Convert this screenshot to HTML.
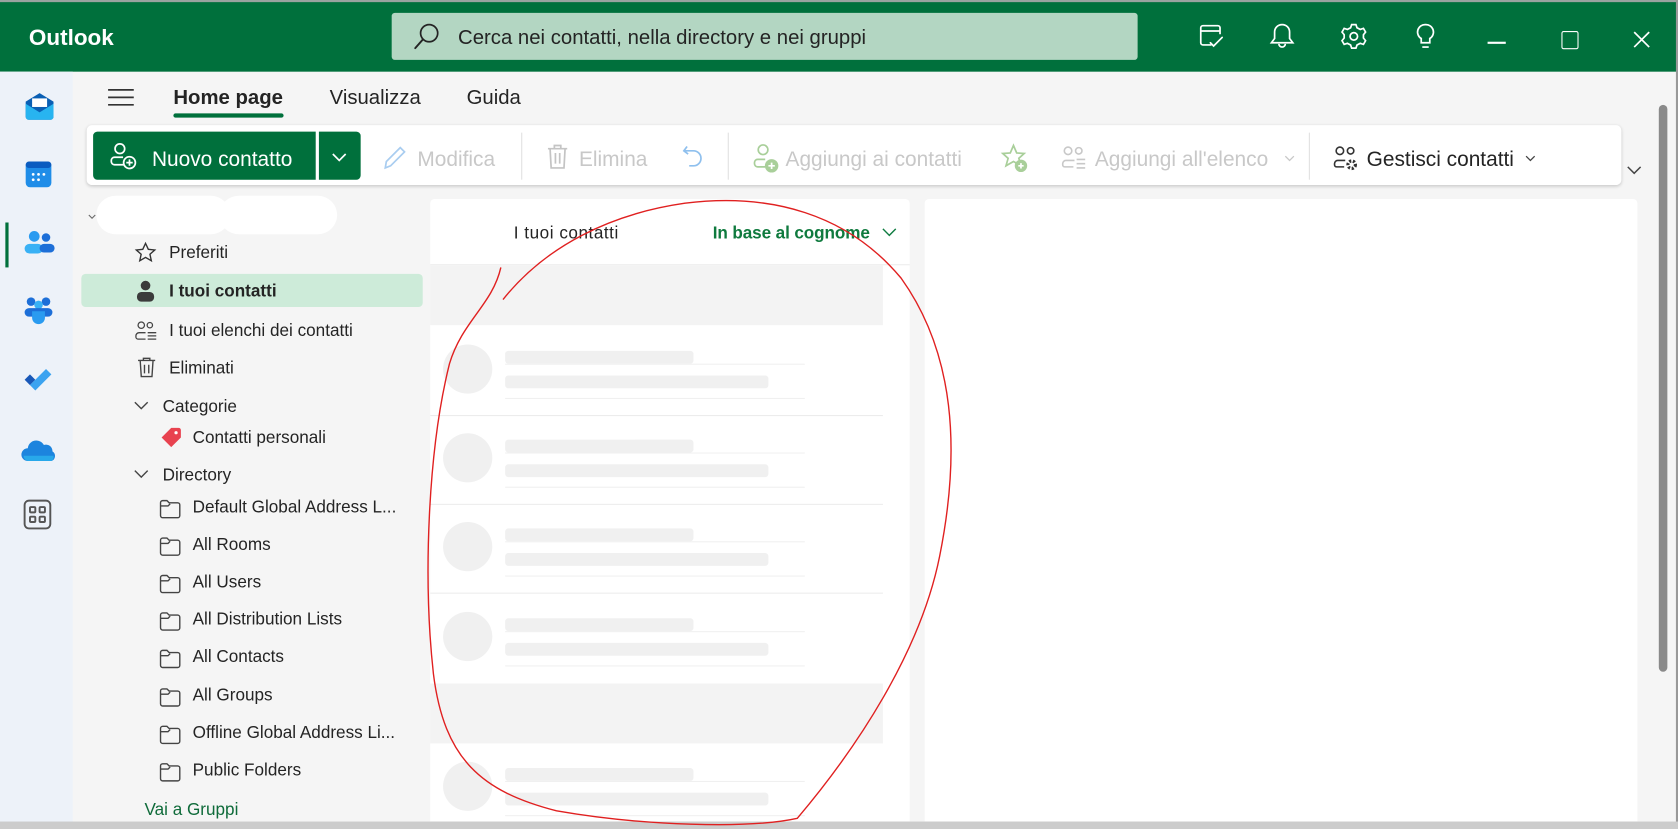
<!DOCTYPE html>
<html><head><meta charset="utf-8"><style>
html,body{margin:0;padding:0;width:1678px;height:829px;overflow:hidden;background:#fff;font-family:"Liberation Sans",sans-serif}
#w{position:absolute;left:0;top:0;width:1568px;height:775px;transform:scale(1.0702,1.0697);transform-origin:0 0;background:#f5f5f5;overflow:hidden}
.a{position:absolute}
.t{position:absolute;white-space:nowrap;font-size:16px;color:#242424;margin-top:2px}
svg{position:absolute;overflow:visible}
.sk{position:absolute;background:#f0f0f0;border-radius:3px}
</style></head><body><div id="w">
<div class="a" style="left:0;top:0;width:1568px;height:67px;background:#00703c"></div>
<div class="a" style="left:0;top:0;width:1568px;height:2px;background:#9aa3a0"></div>
<div class="t" style="left:27px;top:22px;color:#fff;font-size:21px;font-weight:bold">Outlook</div>
<div class="a" style="left:366px;top:12px;width:697px;height:44px;background:#b3d6c2;border-radius:3px"></div>
<svg style="left:385px;top:20px" width="28" height="28" viewBox="0 0 28 28"><circle cx="16" cy="11" r="8" fill="none" stroke="#242424" stroke-width="1.6"/><path d="M10 17 L3 25" stroke="#242424" stroke-width="1.8" stroke-linecap="round"/></svg>
<div class="t" style="left:428px;top:23px;font-size:19px;color:#242424">Cerca nei contatti, nella directory e nei gruppi</div>
<svg style="left:1119px;top:20px" width="28" height="28" viewBox="0 0 28 28" fill="none" stroke="#fff" stroke-width="1.6"><path d="M13 22H5a2 2 0 0 1-2-2V6a2 2 0 0 1 2-2h14a2 2 0 0 1 2 2v6M3 9h18"/><path d="M12 20l3 3 8-8" stroke-linecap="round"/></svg>
<svg style="left:1185px;top:20px" width="26" height="28" viewBox="0 0 26 28" fill="none" stroke="#fff" stroke-width="1.6"><path d="M13 3c-4 0-7 3-7 7v6l-3 4h20l-3-4v-6c0-4-3-7-7-7z"/><path d="M10 21a3 3 0 0 0 6 0"/></svg>
<svg style="left:1251px;top:20px" width="28" height="28" viewBox="0 0 28 28" fill="none" stroke="#fff" stroke-width="1.6"><path d="M12 3h4l1 3 3 1.5 3-1 2 3.5-2 2.5v3l2 2.5-2 3.5-3-1-3 1.5-1 3h-4l-1-3-3-1.5-3 1-2-3.5 2-2.5v-3l-2-2.5 2-3.5 3 1L11 6z"/><circle cx="14" cy="14" r="3.5"/></svg>
<svg style="left:1320px;top:20px" width="24" height="28" viewBox="0 0 24 28" fill="none" stroke="#fff" stroke-width="1.6"><path d="M12 3a7 7 0 0 0-4 13v4h8v-4a7 7 0 0 0-4-13z"/><path d="M9 24h6"/></svg>
<div class="a" style="left:1390px;top:39px;width:17px;height:1.5px;background:#fff"></div>
<div class="a" style="left:1459px;top:29px;width:14px;height:15px;border:1.5px solid #fff;border-radius:2px"></div>
<svg style="left:1526px;top:29px" width="16" height="16" viewBox="0 0 16 16" stroke="#fff" stroke-width="1.6"><path d="M1 1L15 15M15 1L1 15"/></svg>
<div class="a" style="left:0;top:67px;width:68px;height:708px;background:#edf2f9"></div>
<div class="a" style="left:5px;top:208px;width:3px;height:42px;background:#00703c"></div>
<svg style="left:22px;top:85px" width="30" height="28" viewBox="0 0 30 28"><path d="M2 10L15 2l13 8v14a3 3 0 0 1-3 3H5a3 3 0 0 1-3-3z" fill="#0a5fb4"/><path d="M2 12l13 8 13-8v12a3 3 0 0 1-3 3H5a3 3 0 0 1-3-3z" fill="#28b4f0"/><rect x="8" y="7" width="14" height="8" fill="#fff"/></svg>
<svg style="left:23px;top:150px" width="26" height="26" viewBox="0 0 26 26"><rect x="1" y="1" width="24" height="24" rx="4" fill="#1f8de8"/><rect x="1" y="1" width="24" height="6" rx="3" fill="#0b5cc0"/><g fill="#fff"><circle cx="8" cy="13" r="1.3"/><circle cx="13" cy="13" r="1.3"/><circle cx="18" cy="13" r="1.3"/><circle cx="8" cy="18" r="1.3"/><circle cx="13" cy="18" r="1.3"/></g></svg>
<svg style="left:22px;top:214px" width="30" height="26" viewBox="0 0 30 26"><circle cx="10" cy="7" r="5" fill="#2a9bf0"/><circle cx="21" cy="8" r="4" fill="#1d6fd8"/><rect x="1" y="14" width="17" height="9" rx="4.5" fill="#39b1f5"/><rect x="15" y="14" width="14" height="8" rx="4" fill="#1d6fd8"/></svg>
<svg style="left:22px;top:276px" width="28" height="30" viewBox="0 0 28 30"><circle cx="7" cy="6" r="4" fill="#1d6fd8"/><circle cx="21" cy="6" r="4" fill="#1d6fd8"/><circle cx="14" cy="9" r="4" fill="#39b1f5"/><rect x="1" y="12" width="26" height="8" rx="4" fill="#1d6fd8"/><path d="M8 15h12v6a6 6 0 0 1-12 0z" fill="#2a9bf0"/></svg>
<svg style="left:22px;top:342px" width="28" height="26" viewBox="0 0 28 26"><path d="M1 13l5-5 5 5-5 5z" fill="#1958b8"/><path d="M6 18l15-15 5 5-15 15z" fill="#3ba3f0"/></svg>
<svg style="left:20px;top:410px" width="32" height="22" viewBox="0 0 32 22"><path d="M6 21a6 6 0 0 1 0-12 8 8 0 0 1 15-3 6 6 0 0 1 8 6 5 5 0 0 1-1 9z" fill="#1c84de"/><path d="M2 16h28a5 5 0 0 1-2 5H6a5 5 0 0 1-4-5z" fill="#28a8ea"/></svg>
<svg style="left:22px;top:467px" width="26" height="28" viewBox="0 0 26 28" fill="none" stroke="#555" stroke-width="1.8"><rect x="1" y="1" width="24" height="26" rx="4"/><rect x="6" y="7" width="5" height="5" rx="1"/><rect x="15" y="7" width="5" height="5" rx="1"/><rect x="6" y="16" width="5" height="5" rx="1"/><rect x="15" y="16" width="5" height="5" rx="1"/></svg>
<svg style="left:100px;top:82px" width="26" height="18" stroke="#333" stroke-width="1.6"><path d="M1 2h24M1 9h24M1 16h24"/></svg>
<div class="t" style="left:162px;top:79px;font-size:19px;font-weight:bold;color:#242424">Home page</div>
<div class="a" style="left:162px;top:106px;width:103px;height:4px;border-radius:2px;background:#00703c"></div>
<div class="t" style="left:308px;top:79px;font-size:19px">Visualizza</div>
<div class="t" style="left:436px;top:79px;font-size:19px">Guida</div>
<div class="a" style="left:81px;top:117px;width:1434px;height:56px;background:#fff;border-radius:5px;box-shadow:0 1px 3px rgba(0,0,0,.18)"></div>
<div class="a" style="left:87px;top:123px;width:208px;height:45px;background:#00703c;border-radius:4px 0 0 4px"></div>
<div class="a" style="left:298px;top:123px;width:39px;height:45px;background:#00703c;border-radius:0 4px 4px 0"></div>
<svg style="left:102px;top:133px" width="26" height="26" viewBox="0 0 26 26" fill="none" stroke="#fff" stroke-width="1.6"><circle cx="10" cy="6" r="4.5"/><path d="M14 21H5a3 3 0 0 1-3-3v-1a3 3 0 0 1 3-3h8"/><circle cx="19" cy="19" r="5.5"/><path d="M19 16v6M16 19h6"/></svg>
<div class="t" style="left:142px;top:136px;color:#fff;font-size:19.5px">Nuovo contatto</div>
<svg style="left:310px;top:143px" width="14" height="8" fill="none" stroke="#fff" stroke-width="1.6"><path d="M1 1l6 6 6-6"/></svg>
<svg style="left:357px;top:134px" width="24" height="26" viewBox="0 0 24 26" fill="none" stroke="#a9cdf0" stroke-width="1.6"><path d="M3 23l1-6L17 4l4 4L8 21z"/></svg>
<div class="t" style="left:390px;top:136px;font-size:19.5px;color:#c8c8c8">Modifica</div>
<div class="a" style="left:487px;top:124px;width:1px;height:44px;background:#e1e1e1"></div>
<svg style="left:510px;top:134px" width="22" height="26" viewBox="0 0 22 26" fill="none" stroke="#c4c4c4" stroke-width="1.6"><path d="M2 5h18M8 5V2h6v3M4 5l1 18h12l1-18M9 9v10M13 9v10"/></svg>
<div class="t" style="left:541px;top:136px;font-size:19.5px;color:#c8c8c8">Elimina</div>
<svg style="left:637px;top:135px" width="20" height="24" fill="none" stroke="#8fc0ee" stroke-width="1.6"><path d="M5 2L2 6l4 3M2 6h9a6 6 0 0 1 0 14H7"/></svg>
<div class="a" style="left:680px;top:124px;width:1px;height:44px;background:#e1e1e1"></div>
<svg style="left:703px;top:134px" width="26" height="28" viewBox="0 0 26 28" fill="none" stroke="#a9cf9a" stroke-width="1.6"><circle cx="10" cy="6" r="4.5"/><path d="M12 22H5a3 3 0 0 1-3-3v-1a3 3 0 0 1 3-3h7"/><circle cx="18" cy="21" r="5.5" fill="#a9cf9a"/><path d="M18 18v6M15 21h6" stroke="#fff"/></svg>
<div class="t" style="left:734px;top:136px;font-size:19.5px;color:#c8c8c8">Aggiungi ai contatti</div>
<svg style="left:936px;top:134px" width="26" height="28" viewBox="0 0 26 28" fill="none" stroke="#a9cf9a" stroke-width="1.6"><path d="M11 2l3 7 7 .5-5 4.5 2 7-7-4-7 4 2-7-5-4.5 7-.5z"/><circle cx="18" cy="21" r="5" fill="#a9cf9a"/><path d="M18 18.5v5M15.5 21h5" stroke="#fff"/></svg>
<svg style="left:991px;top:136px" width="26" height="24" viewBox="0 0 26 24" fill="none" stroke="#c8c8c8" stroke-width="1.5"><circle cx="7" cy="5" r="3.5"/><circle cx="17" cy="5" r="3"/><path d="M12 20H4a2 2 0 0 1-2-2v-1a3 3 0 0 1 3-3h8M15 13h8M15 17h8M15 21h8"/></svg>
<div class="t" style="left:1023px;top:136px;font-size:19.5px;color:#c8c8c8">Aggiungi all'elenco</div>
<svg style="left:1200px;top:145px" width="10" height="6" fill="none" stroke="#c8c8c8" stroke-width="1.2"><path d="M1 1l4 4 4-4"/></svg>
<div class="a" style="left:1223px;top:124px;width:1px;height:44px;background:#e1e1e1"></div>
<svg style="left:1245px;top:136px" width="26" height="24" viewBox="0 0 26 24" fill="none" stroke="#333" stroke-width="1.5"><circle cx="7" cy="5" r="3.5"/><circle cx="17" cy="5" r="3"/><path d="M11 20H4a2 2 0 0 1-2-2v-1a3 3 0 0 1 3-3h7"/><circle cx="18" cy="18" r="3.5" stroke-width="3" stroke-dasharray="2 1.5"/></svg>
<div class="t" style="left:1277px;top:136px;font-size:19.5px;color:#242424">Gestisci contatti</div>
<svg style="left:1425px;top:145px" width="10" height="6" fill="none" stroke="#444" stroke-width="1.2"><path d="M1 1l4 4 4-4"/></svg>
<svg style="left:1520px;top:155px" width="14" height="8" fill="none" stroke="#444" stroke-width="1.4"><path d="M1 1l6 6 6-6"/></svg>
<div class="a" style="left:90px;top:183px;width:125px;height:36px;background:#fff;border-radius:18px"></div>
<div class="a" style="left:205px;top:183px;width:110px;height:36px;background:#fff;border-radius:18px"></div>
<svg style="left:82px;top:200px" width="8" height="5" fill="none" stroke="#666"><path d="M1 1l3 3 3-3"/></svg>
<svg style="left:126px;top:226px" width="20" height="20" viewBox="0 0 20 20" fill="none" stroke="#333" stroke-width="1.3"><path d="M10 1.5l2.6 5.6 6 .6-4.5 4 1.3 6-5.4-3.1-5.4 3.1 1.3-6-4.5-4 6-.6z"/></svg>
<div class="t" style="left:158px;top:226px">Preferiti</div>
<div class="a" style="left:76px;top:256px;width:319px;height:31px;background:#cdebd9;border-radius:4px"></div>
<svg style="left:127px;top:262px" width="18" height="20" viewBox="0 0 18 20" fill="#3b3b3b"><circle cx="9" cy="5" r="4.5"/><path d="M1 15a4 4 0 0 1 4-4h8a4 4 0 0 1 4 4v1a4 4 0 0 1-4 4H5a4 4 0 0 1-4-4z"/></svg>
<div class="t" style="left:158px;top:262px;font-weight:bold">I tuoi contatti</div>
<svg style="left:126px;top:300px" width="22" height="20" viewBox="0 0 22 20" fill="none" stroke="#444" stroke-width="1.2"><circle cx="6" cy="4" r="3"/><circle cx="14" cy="4" r="2.5"/><path d="M10 17H3a2 2 0 0 1-2-2v-1a3 3 0 0 1 3-3h6M12 11h8M12 14h8M12 17h8"/></svg>
<div class="t" style="left:158px;top:299px">I tuoi elenchi dei contatti</div>
<svg style="left:128px;top:334px" width="18" height="20" viewBox="0 0 18 20" fill="none" stroke="#444" stroke-width="1.3"><path d="M1 3h16M6 3V1h6v2M3 3l1 15h10l1-15M7 7v8M11 7v8"/></svg>
<div class="t" style="left:158px;top:334px">Eliminati</div>
<svg style="left:125px;top:375px" width="14" height="8" fill="none" stroke="#444" stroke-width="1.3"><path d="M1 1l6 6 6-6"/></svg>
<div class="t" style="left:152px;top:370px">Categorie</div>
<svg style="left:150px;top:399px" width="20" height="20" viewBox="0 0 20 20"><path d="M10 1h7a2 2 0 0 1 2 2v7l-9 9-9-9z" fill="#e8424f"/><circle cx="14.5" cy="5.5" r="1.5" fill="#fff"/></svg>
<div class="t" style="left:180px;top:399px">Contatti personali</div>
<svg style="left:125px;top:439px" width="14" height="8" fill="none" stroke="#444" stroke-width="1.3"><path d="M1 1l6 6 6-6"/></svg>
<div class="t" style="left:152px;top:434px">Directory</div>
<div id="folders"></div>
<div class="t" style="left:135px;top:747px;color:#0f6b3a;font-size:16px">Vai a Gruppi</div>
<div class="a" style="left:402px;top:186px;width:448px;height:600px;background:#fff;border-radius:4px 4px 0 0"></div>
<div class="t" style="left:480px;top:208px;font-size:16px;letter-spacing:0.5px">I tuoi contatti</div>
<div class="t" style="left:666px;top:208px;font-size:16px;color:#0f7a3e;font-weight:bold;letter-spacing:-0.1px">In base al cognome</div>
<svg style="left:824px;top:213px" width="14" height="8" fill="none" stroke="#107c41" stroke-width="1.3"><path d="M1 1l6 6 6-6"/></svg>
<div class="a" style="left:402px;top:247px;width:448px;height:1px;background:#ececec"></div>
<div class="a" style="left:402px;top:248px;width:423px;height:56px;background:#f3f3f3"></div>
<div class="a" style="left:402px;top:639px;width:423px;height:56px;background:#f3f3f3"></div>
<div id="rows"></div>
<div class="a" style="left:864px;top:186px;width:666px;height:600px;background:#fff;border-radius:4px"></div>
<div class="a" style="left:1550px;top:98px;width:8px;height:530px;background:#8a8a8a;border-radius:4px"></div>
<div class="a" style="left:1566px;top:0;width:2px;height:775px;background:#999"></div>
<div class="a" style="left:0;top:768px;width:1568px;height:7px;background:#ccc"></div>
<svg style="left:0;top:0" width="1568" height="775"><path d="M468 250 C460 285 432 300 420 340 C400 420 395 540 405 630 C415 710 450 740 520 758 C600 772 700 775 745 765 C800 700 860 610 878 520 C898 420 892 330 842 260 C792 200 720 180 640 190 C570 200 510 230 470 280" fill="none" stroke="#e02020" stroke-width="1.3"/></svg>
</div>
<script>
var f=["Default Global Address L...","All Rooms","All Users","All Distribution Lists","All Contacts","All Groups","Offline Global Address Li...","Public Folders"],h="";
for(var i=0;i<f.length;i++){var y=464+i*35.1;h+='<svg style="left:149px;top:'+(y+3)+'px" width="20" height="18" viewBox="0 0 20 18" fill="none" stroke="#444" stroke-width="1.3"><path d="M1 3a2 2 0 0 1 2-2h4l2 2h8a2 2 0 0 1 2 2v10a2 2 0 0 1-2 2H3a2 2 0 0 1-2-2z"/><path d="M1 6h7l2-2"/></svg><div class="t" style="left:180px;top:'+y+'px">'+f[i]+'</div>';}
document.getElementById('folders').innerHTML=h;
var r="",ys=[305,388,471,555,695];
for(var j=0;j<ys.length;j++){var y=ys[j];r+='<div class="a" style="left:414px;top:'+(y+17)+'px;width:46px;height:46px;border-radius:50%;background:#f0f0f0"></div><div class="sk" style="left:472px;top:'+(y+23)+'px;width:176px;height:12px"></div><div class="a" style="left:472px;top:'+(y+35)+'px;width:280px;height:1px;background:#f0f0f0"></div><div class="sk" style="left:472px;top:'+(y+46)+'px;width:246px;height:12px"></div><div class="a" style="left:472px;top:'+(y+67)+'px;width:280px;height:1px;background:#f0f0f0"></div>';if(j<3)r+='<div class="a" style="left:402px;top:'+(y+83)+'px;width:423px;height:1px;background:#ececec"></div>';}
document.getElementById('rows').innerHTML=r;
</script>
</body></html>
